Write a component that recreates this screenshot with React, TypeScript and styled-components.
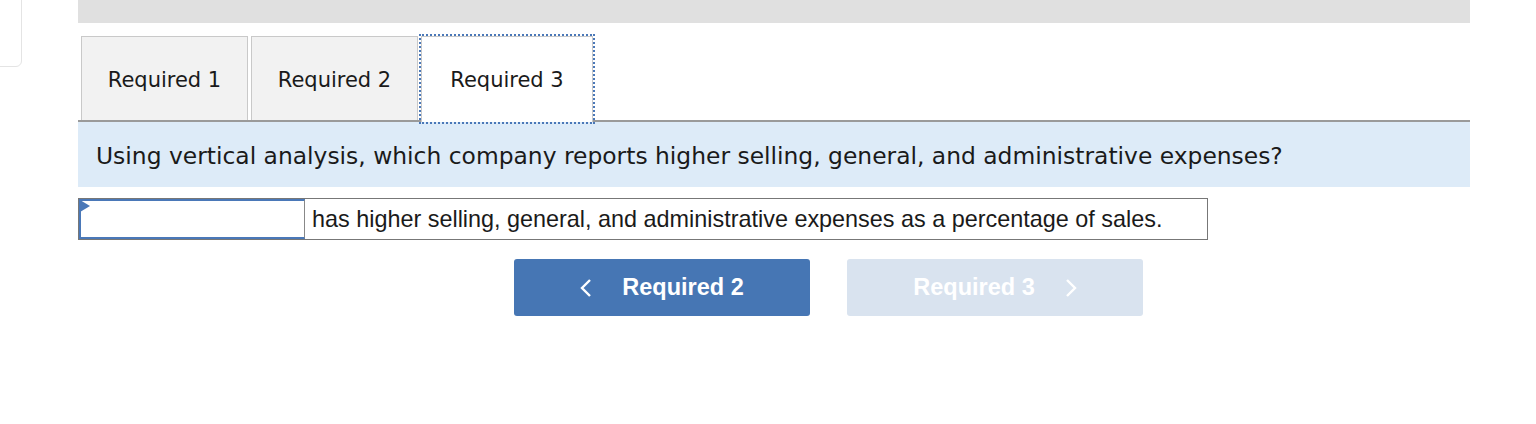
import styled, { createGlobalStyle } from "styled-components";

const GlobalStyle = createGlobalStyle`
  body {
    margin: 0;
    background: #fff;
    font-family: "DejaVu Sans", Verdana, sans-serif;
  }
`;

const tabs = ["Required 1", "Required 2", "Required 3"];

export default function App() {
  return (
    <>
      <GlobalStyle />
      <SideCard />
      <Page>
        <TopBar />
        <TabList>
          {tabs.map((t, i) => (
            <Tab key={t} $active={i === 2}>
              {t}
            </Tab>
          ))}
        </TabList>
        <Question>
          Using vertical analysis, which company reports higher selling, general, and administrative expenses?
        </Question>
        <AnswerRow>
          <SelectCell>
            <Marker />
          </SelectCell>
          <TextCell>
            has higher selling, general, and administrative expenses as a percentage of sales.
          </TextCell>
        </AnswerRow>
        <Nav>
          <NavButton>
            <Chevron viewBox="0 0 12 20">
              <path d="M10 2 L2 10 L10 18" />
            </Chevron>
            Required 2
          </NavButton>
          <NavButton $disabled>
            Required 3
            <Chevron viewBox="0 0 12 20">
              <path d="M2 2 L10 10 L2 18" />
            </Chevron>
          </NavButton>
        </Nav>
      </Page>
    </>
  );
}

const SideCard = styled.div`
  position: absolute;
  left: -20px;
  top: -20px;
  width: 40px;
  height: 85px;
  border: 1px solid #e4e4e4;
  border-radius: 6px;
`;

const Page = styled.div`
  margin-left: 78px;
  width: 1392px;
`;

const TopBar = styled.div`
  height: 23px;
  background: #e0e0e0;
`;

const TabList = styled.div`
  display: flex;
  gap: 3px;
  margin-top: 13px;
  padding-left: 3px;
  border-bottom: 2px solid #9a9a9a;
  height: 84px;
`;

const Tab = styled.div<{ $active?: boolean }>`
  box-sizing: border-box;
  width: ${(p) => (p.$active ? "172px" : "167px")};
  height: ${(p) => (p.$active ? "86px" : "84px")};
  display: flex;
  align-items: center;
  justify-content: center;
  padding-top: ${(p) => (p.$active ? "0" : "2px")};
  background: ${(p) => (p.$active ? "#fff" : "#f2f2f2")};
  border: 1px solid #c9c9c9;
  border-bottom: none;
  font-size: 21px;
  color: #1a1a1a;
  position: relative;
  z-index: 1;
  outline: ${(p) => (p.$active ? "2px dotted #4a78b8" : "none")};
  outline-offset: 0;
`;

const Question = styled.div`
  height: 65px;
  display: flex;
  align-items: center;
  padding-left: 18px;
  padding-top: 2px;
  box-sizing: border-box;
  background: #ddebf8;
  font-size: 23.4px;
  color: #1a1a1a;
`;

const AnswerRow = styled.div`
  box-sizing: border-box;
  display: flex;
  margin-top: 11px;
  width: 1130px;
  height: 42px;
  border: 1px solid #777;
`;

const SelectCell = styled.div`
  box-sizing: border-box;
  position: relative;
  width: 226px;
  height: 100%;
  border: 2px solid #4a78b8;
  border-right: 1px solid #888;
`;

const Marker = styled.div`
  position: absolute;
  left: -1px;
  top: -1px;
  width: 0;
  height: 0;
  border-top: 6px solid transparent;
  border-bottom: 6px solid transparent;
  border-left: 10px solid #4a78b8;
`;

const TextCell = styled.div`
  flex: 1;
  display: flex;
  align-items: center;
  padding-left: 7px;
  font-family: "Liberation Sans", Arial, sans-serif;
  font-size: 23.4px;
  color: #1a1a1a;
`;

const Nav = styled.div`
  display: flex;
  gap: 37px;
  margin-top: 19px;
  margin-left: 436px;
`;

const NavButton = styled.div<{ $disabled?: boolean }>`
  width: 296px;
  height: 57px;
  display: flex;
  align-items: center;
  justify-content: center;
  gap: 30px;
  border-radius: 3px;
  background: ${(p) => (p.$disabled ? "#d9e3ef" : "#4676b4")};
  color: #fff;
  font-family: "Liberation Sans", Arial, sans-serif;
  font-weight: bold;
  font-size: 23.5px;
`;

const Chevron = styled.svg`
  width: 12px;
  height: 20px;
  fill: none;
  stroke: #fff;
  stroke-width: 2.4;
`;
